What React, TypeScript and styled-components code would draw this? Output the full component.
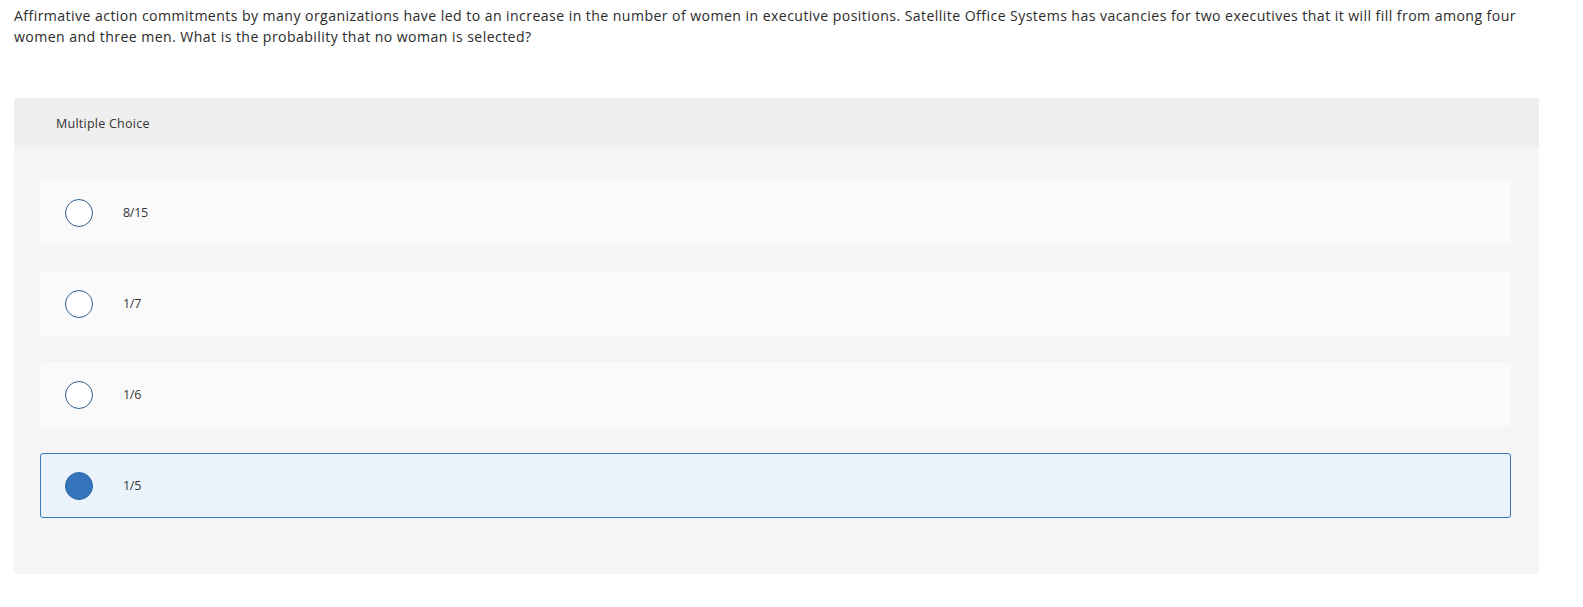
import styled, { createGlobalStyle } from "styled-components";

const options = ["8/15", "1/7", "1/6", "1/5"];
const selectedIndex = 3;

function App() {
  return (
    <Page>
      <GlobalStyle />
      <Question>
        Affirmative action commitments by many organizations have led to an
        increase in the number of women in executive positions. Satellite
        Office Systems has vacancies for two executives that it will fill from
        among four women and three men. What is the probability that no woman
        is selected?
      </Question>
      <Card>
        <CardHeader>Multiple Choice</CardHeader>
        <OptionList>
          {options.map((label, i) => {
            const selected = i === selectedIndex;
            return (
              <Option key={label} selected={selected}>
                <Radio selected={selected} />
                <OptionLabel>{label}</OptionLabel>
              </Option>
            );
          })}
        </OptionList>
      </Card>
    </Page>
  );
}

export default App;

const GlobalStyle = createGlobalStyle`
  body {
    margin: 0;
    background: #fff;
    font-family: "Open Sans", "Liberation Sans", sans-serif;
    color: #333;
  }
  * {
    box-sizing: border-box;
  }
`;

const Page = styled.div`
  padding: 5px 44px 0 14px;
`;

const Question = styled.p`
  margin: 0;
  font-size: 14.1px;
  line-height: 21px;
  letter-spacing: 0.43px;
  color: #2b2b2b;
`;

const Card = styled.div`
  margin-top: 51px;
  background: #f5f5f5;
  border-radius: 3px;
  overflow: hidden;
`;

const CardHeader = styled.div`
  height: 50px;
  display: flex;
  align-items: center;
  padding-left: 42px;
  background: #efefef;
  font-size: 12.5px;
  letter-spacing: 0.25px;
  color: #333;
`;

const OptionList = styled.div`
  display: flex;
  flex-direction: column;
  gap: 26px;
  padding: 32px 28px 56px 26px;
`;

const Option = styled.div<{ selected: boolean }>`
  height: 65px;
  display: flex;
  align-items: center;
  padding-left: ${(p) => (p.selected ? "24px" : "25px")};
  border-radius: 3px;
  background: ${(p) => (p.selected ? "#eaf2fb" : "#fafafa")};
  border: ${(p) => (p.selected ? "1px solid #3a78bd" : "none")};
`;

const Radio = styled.span<{ selected: boolean }>`
  width: 28px;
  height: 28px;
  flex-shrink: 0;
  border-radius: 50%;
  border: 1.5px solid ${(p) => (p.selected ? "#2d65a3" : "#2f6090")};
  background: ${(p) => (p.selected ? "#3574ba" : "#fff")};
`;

const OptionLabel = styled.span`
  margin-left: 30px;
  font-size: 12.5px;
  letter-spacing: -0.3px;
  color: #333;
`;
